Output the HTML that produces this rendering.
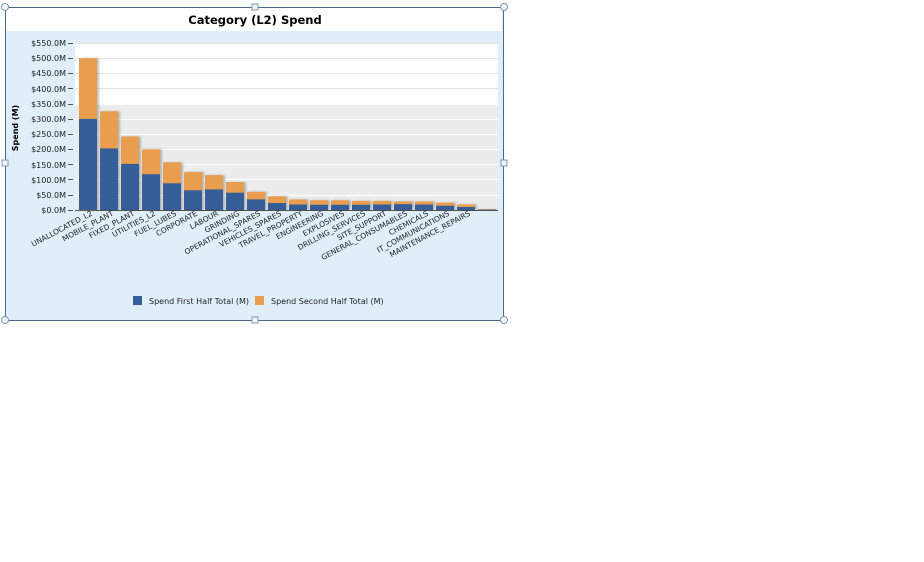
<!DOCTYPE html>
<html><head><meta charset="utf-8"><style>
html,body{margin:0;padding:0;background:#fff;width:924px;height:562px;overflow:hidden}
svg{position:absolute;left:0;top:0}
text{font-family:"DejaVu Sans","Liberation Sans",sans-serif}
</style></head><body>
<svg width="924" height="562" viewBox="0 0 924 562">
<defs><filter id="sh" x="-20%" y="-5%" width="150%" height="110%"><feDropShadow dx="2" dy="0" stdDeviation="1" flood-color="#000" flood-opacity="0.25"/></filter></defs>
<rect x="5" y="7" width="498" height="313" fill="#dfeef7"/>
<rect x="6" y="8" width="496" height="23" fill="#fff"/>
<text x="255" y="24" font-size="11.5" font-weight="bold" text-anchor="middle" fill="#000">Category (L2) Spend</text>
<rect x="75" y="43" width="423" height="167" fill="#fff"/>
<rect x="75" y="104" width="423" height="106" fill="#ececec"/>
<g stroke="#e4e4e4" stroke-width="1">
<line x1="75" x2="498" y1="43.5" y2="43.5"/><line x1="75" x2="498" y1="58.5" y2="58.5"/><line x1="75" x2="498" y1="73.5" y2="73.5"/><line x1="75" x2="498" y1="88.5" y2="88.5"/></g>
<g stroke="#fff" stroke-width="1">
<line x1="75" x2="498" y1="104.5" y2="104.5"/><line x1="75" x2="498" y1="119.5" y2="119.5"/><line x1="75" x2="498" y1="134.5" y2="134.5"/><line x1="75" x2="498" y1="149.5" y2="149.5"/><line x1="75" x2="498" y1="164.5" y2="164.5"/><line x1="75" x2="498" y1="179.5" y2="179.5"/><line x1="75" x2="498" y1="195.5" y2="195.5"/></g>
<g font-size="8" fill="#222" text-anchor="end">
<text x="66" y="46">$550.0M</text><text x="66" y="61">$500.0M</text><text x="66" y="76">$450.0M</text><text x="66" y="92">$400.0M</text><text x="66" y="107">$350.0M</text><text x="66" y="122">$300.0M</text><text x="66" y="137">$250.0M</text><text x="66" y="152">$200.0M</text><text x="66" y="168">$150.0M</text><text x="66" y="183">$100.0M</text><text x="66" y="198">$50.0M</text><text x="66" y="213">$0.0M</text>
</g>
<g stroke="#555"><line x1="68" x2="73" y1="43.5" y2="43.5"/><line x1="68" x2="73" y1="58.5" y2="58.5"/><line x1="68" x2="73" y1="73.5" y2="73.5"/><line x1="68" x2="73" y1="88.5" y2="88.5"/><line x1="68" x2="73" y1="104.5" y2="104.5"/><line x1="68" x2="73" y1="119.5" y2="119.5"/><line x1="68" x2="73" y1="134.5" y2="134.5"/><line x1="68" x2="73" y1="149.5" y2="149.5"/><line x1="68" x2="73" y1="164.5" y2="164.5"/><line x1="68" x2="73" y1="179.5" y2="179.5"/><line x1="68" x2="73" y1="195.5" y2="195.5"/><line x1="68" x2="73" y1="210.5" y2="210.5"/>
<line x1="75" x2="498" y1="210.5" y2="210.5"/></g>
<text transform="translate(18,128) rotate(-90)" font-size="8" font-weight="bold" text-anchor="middle" fill="#000">Spend (M)</text>
<g filter="url(#sh)">
<g fill="#e89d4f">
<rect x="79" y="58.2" width="18" height="152"/><rect x="100" y="111.3" width="18" height="98.7"/><rect x="121" y="136.5" width="18" height="73.5"/><rect x="142" y="149.3" width="18" height="60.7"/><rect x="163" y="162.3" width="18" height="47.7"/><rect x="184" y="172.1" width="18" height="37.9"/><rect x="205" y="175.1" width="18" height="34.9"/><rect x="226" y="182.1" width="18" height="27.9"/><rect x="247" y="191.8" width="18" height="18.2"/><rect x="268" y="196.3" width="18" height="13.7"/><rect x="289" y="199.4" width="18" height="10.6"/><rect x="310" y="200.3" width="18" height="9.7"/><rect x="331" y="200.3" width="18" height="9.7"/><rect x="352" y="200.9" width="18" height="9.1"/><rect x="373" y="200.9" width="18" height="9.1"/><rect x="394" y="201.5" width="18" height="8.5"/><rect x="415" y="201.5" width="18" height="8.5"/><rect x="436" y="202.7" width="18" height="7.3"/><rect x="457" y="204.5" width="18" height="5.5"/><rect x="478" y="209.2" width="18" height="0.8"/>
</g></g>
<g fill="#355e98">
<rect x="79" y="118.9" width="18" height="91.1"/><rect x="100" y="148.4" width="18" height="61.6"/><rect x="121" y="163.9" width="18" height="46.1"/><rect x="142" y="174.2" width="18" height="35.8"/><rect x="163" y="183.3" width="18" height="26.7"/><rect x="184" y="190.3" width="18" height="19.7"/><rect x="205" y="189.4" width="18" height="20.6"/><rect x="226" y="192.7" width="18" height="17.3"/><rect x="247" y="199.4" width="18" height="10.6"/><rect x="268" y="203" width="18" height="7"/><rect x="289" y="204.5" width="18" height="5.5"/><rect x="310" y="204.8" width="18" height="5.2"/><rect x="331" y="204.8" width="18" height="5.2"/><rect x="352" y="204.8" width="18" height="5.2"/><rect x="373" y="204.5" width="18" height="5.5"/><rect x="394" y="204.2" width="18" height="5.8"/><rect x="415" y="204.5" width="18" height="5.5"/><rect x="436" y="205.7" width="18" height="4.3"/><rect x="457" y="207" width="18" height="3"/><rect x="478" y="209.6" width="18" height="0.4"/>
</g>
<g font-size="7.5" fill="#222" text-anchor="end" font-family="Liberation Sans, sans-serif">
<text transform="translate(93,215) rotate(-28)">UNALLOCATED_L2</text>
<text transform="translate(114,215) rotate(-28)">MOBILE_PLANT</text>
<text transform="translate(135,215) rotate(-28)">FIXED_PLANT</text>
<text transform="translate(156,215) rotate(-28)">UTILITIES_L2</text>
<text transform="translate(177,215) rotate(-28)">FUEL_LUBES</text>
<text transform="translate(198,215) rotate(-28)">CORPORATE</text>
<text transform="translate(219,215) rotate(-28)">LABOUR</text>
<text transform="translate(240,215) rotate(-28)">GRINDING</text>
<text transform="translate(261,215) rotate(-28)">OPERATIONAL_SPARES</text>
<text transform="translate(282,215) rotate(-28)">VEHICLES_SPARES</text>
<text transform="translate(303,215) rotate(-28)">TRAVEL_PROPERTY</text>
<text transform="translate(324,215) rotate(-28)">ENGINEERING</text>
<text transform="translate(345,215) rotate(-28)">EXPLOSIVES</text>
<text transform="translate(366,215) rotate(-28)">DRILLING_SERVICES</text>
<text transform="translate(387,215) rotate(-28)">SITE_SUPPORT</text>
<text transform="translate(408,215) rotate(-28)">GENERAL_CONSUMABLES</text>
<text transform="translate(429,215) rotate(-28)">CHEMICALS</text>
<text transform="translate(450,215) rotate(-28)">IT_COMMUNICATIONS</text>
<text transform="translate(471,215) rotate(-28)">MAINTENANCE_REPAIRS</text>
</g>
<rect x="133" y="296" width="9" height="9" fill="#355e98"/>
<text x="149" y="304" font-size="8" fill="#222">Spend First Half Total (M)</text>
<rect x="255" y="296" width="9" height="9" fill="#e89d4f"/>
<text x="271" y="304" font-size="8" fill="#222">Spend Second Half Total (M)</text>
<rect x="5.5" y="7.5" width="498" height="313" fill="none" stroke="#4a6a8a" stroke-width="1"/>
<g fill="#f2f6fa" stroke="#7a98b8" stroke-width="1">
<circle cx="5" cy="7" r="3.5"/><circle cx="504" cy="7" r="3.5"/><circle cx="5" cy="320" r="3.5"/><circle cx="504" cy="320" r="3.5"/>
<rect x="252" y="4" width="6" height="6"/><rect x="252" y="317" width="6" height="6"/><rect x="2" y="160" width="6" height="6"/><rect x="501" y="160" width="6" height="6"/>
</g>
</svg>
</body></html>
